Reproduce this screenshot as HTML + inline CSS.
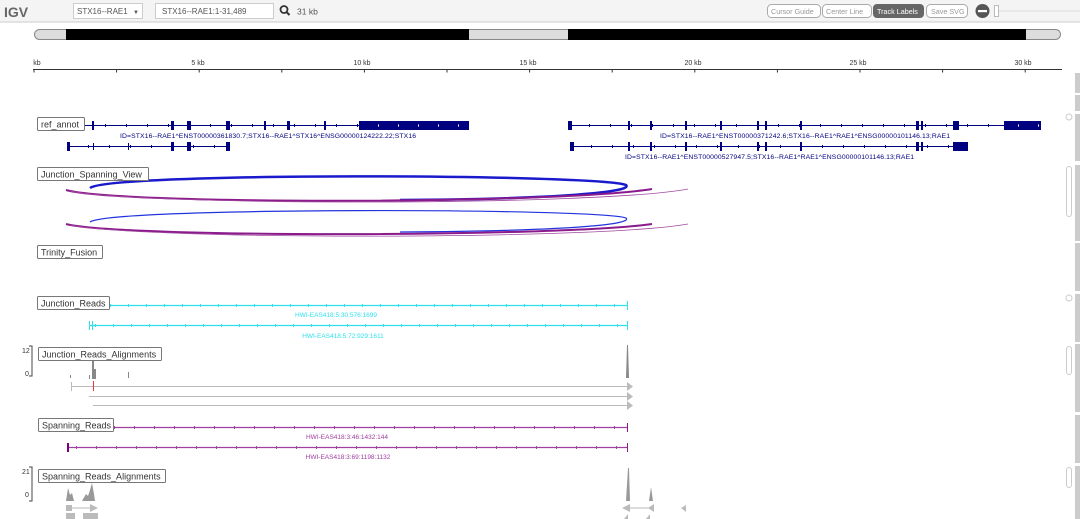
<!DOCTYPE html>
<html><head><meta charset="utf-8"><style>
body{margin:0;width:1080px;height:519px;overflow:hidden;background:#fff;font-family:"Liberation Sans",sans-serif;}
svg{position:absolute;left:0;top:0}
</style></head><body>
<svg width="1080" height="519" viewBox="0 0 1080 519" font-family="Liberation Sans, sans-serif">
<rect x="0" y="0" width="1080" height="22" fill="#f4f4f4"/>
<line x1="0" y1="22" x2="1080" y2="22" stroke="#ccc"/>
<text x="4" y="17" font-size="14" font-weight="bold" fill="#666">IGV</text>
<rect x="73.5" y="3.5" width="69" height="15" fill="#fff" stroke="#ccc"/>
<text x="77" y="14" font-size="8" fill="#555">STX16--RAE1</text>
<text x="133" y="14" font-size="6" fill="#555">▼</text>
<rect x="155.5" y="3.5" width="118" height="15" fill="#fff" stroke="#ccc"/>
<text x="162" y="14" font-size="8" fill="#555">STX16--RAE1:1-31,489</text>
<circle cx="284" cy="9.5" r="3.5" fill="none" stroke="#333" stroke-width="1.8"/>
<line x1="286.5" y1="12" x2="289.5" y2="15" stroke="#333" stroke-width="2"/>
<text x="297" y="14.5" font-size="8.5" fill="#555">31 kb</text>
<rect x="767.5" y="4.5" width="53" height="13" rx="4" fill="#fff" stroke="#aaa"/>
<text x="771" y="14" font-size="7.2" fill="#999">Cursor Guide</text>
<rect x="822.5" y="4.5" width="49" height="13" rx="4" fill="#fff" stroke="#aaa"/>
<text x="826" y="14" font-size="7.2" fill="#999">Center Line</text>
<rect x="873" y="4" width="51" height="14" rx="4" fill="#666"/>
<text x="877" y="14" font-size="7.2" fill="#fff">Track Labels</text>
<rect x="926.5" y="4.5" width="41" height="13" rx="4" fill="#fff" stroke="#aaa"/>
<text x="931" y="14" font-size="7.2" fill="#999">Save SVG</text>
<circle cx="982.5" cy="11" r="7" fill="#555"/>
<rect x="978" y="10" width="9" height="2.2" fill="#fff"/>
<line x1="994" y1="11" x2="1080" y2="11" stroke="#ddd"/>
<rect x="994.5" y="5.5" width="4" height="11" fill="#fff" stroke="#bbb"/>
<rect x="34.5" y="29.5" width="1026" height="10" rx="5" fill="#ddd" stroke="#888"/>
<rect x="66" y="29" width="403" height="11" fill="#000"/>
<rect x="568" y="29" width="458" height="11" fill="#000"/>
<g font-size="7" fill="#333" text-anchor="middle">
<text x="37" y="65">kb</text><text x="198" y="65">5 kb</text><text x="362" y="65">10 kb</text><text x="528" y="65">15 kb</text><text x="693" y="65">20 kb</text><text x="858" y="65">25 kb</text><text x="1023" y="65">30 kb</text>
</g>
<line x1="33" y1="69.5" x2="1062" y2="69.5" stroke="#333"/>
<line x1="33" y1="71" x2="1062" y2="71" stroke="#333" stroke-width="3" stroke-dasharray="1 81.6" stroke-dashoffset="-0.5"/>
<g fill="#ccc"><rect x="1075" y="73" width="5" height="20"/><rect x="1075" y="95" width="5" height="16"/><rect x="1075" y="114" width="5" height="47"/><rect x="1075" y="165" width="5" height="76"/><rect x="1075" y="243" width="5" height="48"/><rect x="1075" y="294" width="5" height="48"/><rect x="1075" y="344" width="5" height="68"/><rect x="1075" y="415" width="5" height="48"/><rect x="1075" y="466" width="5" height="53"/></g>
<g fill="none" stroke="#ccc"><circle cx="1069" cy="117" r="3"/><rect x="1066.5" y="166.5" width="5" height="50" rx="2.5"/><circle cx="1069" cy="298" r="3"/><rect x="1066.5" y="346.5" width="5" height="28" rx="2.5"/><rect x="1066.5" y="467.5" width="5" height="20" rx="2.5"/></g>
<!-- ref_annot -->
<g stroke="#000080" stroke-width="1">
<line x1="84" y1="125.5" x2="469" y2="125.5"/><line x1="84" y1="125.5" x2="469" y2="125.5" stroke-width="3" stroke-dasharray="1 20"/>
<line x1="67" y1="146.5" x2="230" y2="146.5"/><line x1="67" y1="146.5" x2="230" y2="146.5" stroke-width="3" stroke-dasharray="1 20"/>
<line x1="568" y1="125.5" x2="1041" y2="125.5"/><line x1="568" y1="125.5" x2="1041" y2="125.5" stroke-width="3" stroke-dasharray="1 20"/>
<line x1="570" y1="146.5" x2="968" y2="146.5"/><line x1="570" y1="146.5" x2="968" y2="146.5" stroke-width="3" stroke-dasharray="1 20"/>
</g>
<g fill="#000080">
<rect x="92" y="121" width="2" height="9"/><rect x="171" y="121" width="3" height="9"/><rect x="187" y="121" width="4" height="9"/><rect x="226" y="121" width="4" height="9"/><rect x="264" y="121" width="2" height="9"/><rect x="287" y="121" width="3" height="9"/><rect x="324" y="121" width="2" height="9"/>
<rect x="359" y="121" width="110" height="9"/>
<rect x="67" y="142" width="3" height="9"/><rect x="93" y="143" width="1" height="7"/><rect x="128" y="143" width="1" height="7"/><rect x="171" y="142" width="3" height="9"/><rect x="187" y="142" width="4" height="9"/><rect x="226" y="142" width="4" height="9"/>
<rect x="568" y="121" width="4" height="9"/><rect x="628" y="121" width="2" height="9"/><rect x="650" y="121" width="2" height="9"/><rect x="685" y="121" width="2" height="9"/><rect x="720" y="121" width="2" height="9"/><rect x="757" y="121" width="2" height="9"/><rect x="765" y="121" width="2" height="9"/><rect x="800" y="121" width="2" height="9"/><rect x="916" y="121" width="3" height="9"/><rect x="921" y="121" width="2" height="9"/><rect x="953" y="121" width="6" height="9"/>
<rect x="1004" y="121" width="37" height="9"/>
<rect x="570" y="142" width="4" height="9"/><rect x="628" y="142" width="2" height="9"/><rect x="650" y="142" width="2" height="9"/><rect x="685" y="142" width="2" height="9"/><rect x="720" y="142" width="2" height="9"/><rect x="757" y="142" width="2" height="9"/><rect x="765" y="142" width="2" height="9"/><rect x="800" y="142" width="2" height="9"/><rect x="916" y="142" width="3" height="9"/><rect x="921" y="142" width="2" height="9"/>
<rect x="953" y="142" width="15" height="9"/>
</g>
<line x1="378" y1="125.5" x2="469" y2="125.5" stroke="#fff" stroke-width="2" stroke-dasharray="1 19"/>
<line x1="1018" y1="125.5" x2="1041" y2="125.5" stroke="#fff" stroke-width="2" stroke-dasharray="1 19"/>
<g font-size="6.8" fill="#000080">
<text x="120" y="138" textLength="296">ID=STX16--RAE1^ENST00000361830.7;STX16--RAE1^STX16^ENSG00000124222.22;STX16</text>
<text x="660" y="138" textLength="290">ID=STX16--RAE1^ENST00000371242.6;STX16--RAE1^RAE1^ENSG00000101146.13;RAE1</text>
<text x="625" y="159" textLength="289">ID=STX16--RAE1^ENST00000527947.5;STX16--RAE1^RAE1^ENSG00000101146.13;RAE1</text>
</g>
<!-- arcs -->
<g fill="none">
<path d="M90,188 C110,172 600,174 626,185 C634,192 560,199 400,200" stroke="#1a1acc" stroke-width="2.5"/>
<path d="M66,190 C120,205 560,204 652,189" stroke="#8b1a8b" stroke-width="2"/>
<path d="M70,191 C140,206 600,206 688,189" stroke="#a04aa0" stroke-width="0.8"/>
<path d="M90,222 C110,207 600,208 626,218 C634,225 560,231 400,232" stroke="#2233dd" stroke-width="1.2"/>
<path d="M66,224 C120,238 560,237 652,224" stroke="#8b1a8b" stroke-width="2"/>
<path d="M70,225 C140,240 600,240 688,224" stroke="#a04aa0" stroke-width="0.8"/>
</g>
<!-- junction reads -->
<line x1="110" y1="305.5" x2="628" y2="305.5" stroke="#30e0ea" stroke-width="1.2"/>
<line x1="110" y1="305.5" x2="628" y2="305.5" stroke="#30e0ea" stroke-width="3" stroke-dasharray="1 17"/>
<line x1="627.5" y1="301" x2="627.5" y2="310" stroke="#30e0ea"/>
<line x1="89" y1="325.5" x2="628" y2="325.5" stroke="#30e0ea" stroke-width="1.2"/>
<line x1="95" y1="325.5" x2="628" y2="325.5" stroke="#30e0ea" stroke-width="3" stroke-dasharray="1 17"/>
<line x1="89.5" y1="321" x2="89.5" y2="330" stroke="#30e0ea"/><line x1="92.5" y1="321" x2="92.5" y2="330" stroke="#30e0ea"/><line x1="627.5" y1="321" x2="627.5" y2="330" stroke="#30e0ea"/>
<g font-size="6.5" fill="#30e0ea" text-anchor="middle"><text x="336" y="317">HWI-EAS418:5:30:576:1699</text><text x="343" y="338">HWI-EAS418:5:72:929:1611</text></g>
<!-- alignments -->
<g stroke="#444" fill="none"><path d="M29,346 H32 V376 H29"/><path d="M29,467 H32 V501 H29"/></g>
<g font-size="7" fill="#333"><text x="22" y="353">12</text><text x="25" y="376">0</text><text x="22" y="474">21</text><text x="25" y="497">0</text></g>
<g fill="#888"><rect x="92" y="361" width="2" height="18"/><rect x="94" y="369" width="2" height="10"/><rect x="89" y="375" width="1" height="4"/><rect x="70" y="375" width="1" height="3"/><rect x="128" y="372" width="1" height="6"/><path d="M626,378 L627,345 L628,345 L629,378Z"/></g>
<g stroke="#bbb"><line x1="71" y1="386.5" x2="628" y2="386.5"/><line x1="89" y1="396.5" x2="628" y2="396.5"/><line x1="93" y1="405.5" x2="628" y2="405.5"/><line x1="71.5" y1="382" x2="71.5" y2="391"/></g>
<line x1="93.5" y1="381" x2="93.5" y2="391" stroke="#e33"/>
<g fill="#bbb"><polygon points="627,382 633,386.5 627,391"/><polygon points="627,392 633,396.5 627,401"/><polygon points="627,401 633,405.5 627,410"/></g>
<!-- spanning reads -->
<line x1="114" y1="427.5" x2="628" y2="427.5" stroke="#a040a0" stroke-width="1.2"/>
<line x1="114" y1="427.5" x2="628" y2="427.5" stroke="#a040a0" stroke-width="3" stroke-dasharray="1 19"/>
<line x1="627.5" y1="423" x2="627.5" y2="432" stroke="#8b1a8b"/>
<line x1="68" y1="447.5" x2="628" y2="447.5" stroke="#a040a0" stroke-width="1.2"/>
<line x1="76" y1="447.5" x2="628" y2="447.5" stroke="#a040a0" stroke-width="3" stroke-dasharray="1 19"/>
<line x1="627.5" y1="443" x2="627.5" y2="452" stroke="#8b1a8b"/>
<rect x="67" y="443" width="2" height="9" fill="#7a007a"/>
<g font-size="6.5" fill="#a040a0" text-anchor="middle"><text x="347" y="439">HWI-EAS418:3:46:1432:144</text><text x="348" y="459">HWI-EAS418:3:69:1198:1132</text></g>
<!-- spanning alignments -->
<g fill="#999"><path d="M66,501 L68,488 L70,495 L72,493 L74,501Z"/><path d="M82,501 L86,494 L88,496 L90,490 L92,483 L94,494 L95,501Z"/><path d="M626,501 L628,468 L629,468 L630,501Z"/><path d="M649,501 L651,487 L653,501Z"/></g>
<g fill="#bbb"><rect x="66" y="505" width="6" height="6"/><line x1="72" y1="508" x2="94" y2="508" stroke="#bbb"/><polygon points="90,504 98,508 90,512"/><rect x="66" y="513" width="9" height="6"/><rect x="83" y="513" width="15" height="6"/><polygon points="622,508 630,504 630,512"/><line x1="630" y1="508" x2="652" y2="508" stroke="#bbb"/><polygon points="648,508 654,504 654,512"/><polygon points="681,508 686,505 686,512"/><polygon points="624,519 628,514 628,519"/><polygon points="646,519 650,514 650,519"/></g>
<!-- labels -->
<g font-size="9" fill="#333">
<rect x="37.5" y="117.5" width="47" height="13" rx="1" fill="#fff" stroke="#777"/><text x="41" y="127.5">ref_annot</text>
<rect x="37.5" y="167.5" width="111" height="13" rx="1" fill="#fff" stroke="#777"/><text x="41" y="177.5">Junction_Spanning_View</text>
<rect x="37.5" y="245.5" width="65" height="13" rx="1" fill="#fff" stroke="#777"/><text x="41" y="255.5">Trinity_Fusion</text>
<rect x="37.5" y="296.5" width="72" height="13" rx="1" fill="#fff" stroke="#777"/><text x="41" y="306.5">Junction_Reads</text>
<rect x="38.5" y="347.5" width="123" height="13" rx="1" fill="#fff" stroke="#777"/><text x="42" y="357.5">Junction_Reads_Alignments</text>
<rect x="38.5" y="418.5" width="75" height="13" rx="1" fill="#fff" stroke="#777"/><text x="42" y="428.5">Spanning_Reads</text>
<rect x="38.5" y="469.5" width="127" height="13" rx="1" fill="#fff" stroke="#777"/><text x="42" y="479.5">Spanning_Reads_Alignments</text>
</g>
</svg>
</body></html>
